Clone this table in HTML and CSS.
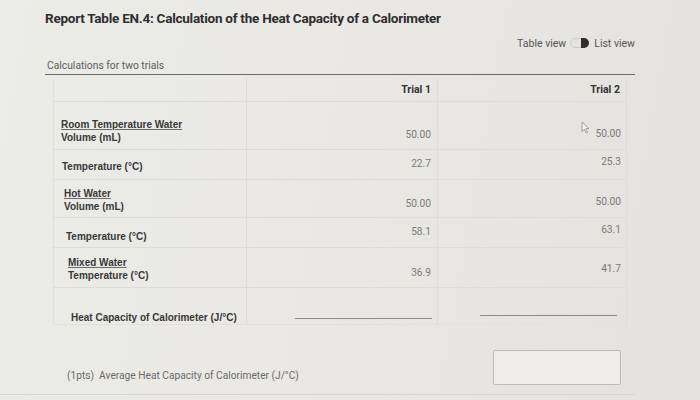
FILE: index.html
```html
<!DOCTYPE html>
<html>
<head>
<meta charset="utf-8">
<link rel="stylesheet" href="styles.css">
</head>
<body>
<div class="page">
  <h1 class="title">Report Table EN.4: Calculation of the Heat Capacity of a Calorimeter</h1>
  <div class="toggle-row">
    <span class="toggle-label">Table view</span>
    <svg class="switch" width="24" height="14" viewBox="0 0 24 14">
      <path d="M7 2.5 H15 A4.5 4.5 0 0 1 15 11.5 H7 A4.5 4.5 0 0 1 7 2.5 Z" fill="#e4e3e0" stroke="#cfcdca" stroke-width="1"/>
      <path d="M13 2 H16 A5 5 0 0 1 16 12 H13 Z" fill="#2e2e30"/>
    </svg>
    <span class="toggle-label">List view</span>
  </div>
  <div class="section-head">Calculations for two trials</div>
  <div class="table">
    <div class="cell head"></div>
    <div class="cell head num">Trial 1</div>
    <div class="cell head num">Trial 2</div>

    <div class="cell label r1"><div><span class="u">Room Temperature Water</span><br>Volume (mL)</div></div>
    <div class="cell val r1">50.00</div>
    <div class="cell val r1 v2"><svg class="cursor" width="9" height="13" viewBox="0 0 9 13"><path d="M1 1 L1 10.5 L3.4 8.3 L5.2 12 L6.6 11.3 L4.9 7.7 L8 7.5 Z" fill="#f2f2f0" stroke="#8a8a8a" stroke-width="0.8" stroke-linejoin="round"/></svg>50.00</div>

    <div class="cell label r2 in1"><div>Temperature (°C)</div></div>
    <div class="cell val r2">22.7</div>
    <div class="cell val r2 v2">25.3</div>

    <div class="cell label r3 in2"><div><span class="u">Hot Water</span><br>Volume (mL)</div></div>
    <div class="cell val r3">50.00</div>
    <div class="cell val r3 v2">50.00</div>

    <div class="cell label r4 in3"><div>Temperature (°C)</div></div>
    <div class="cell val r4">58.1</div>
    <div class="cell val r4 v2">63.1</div>

    <div class="cell label r5 in4"><div><span class="u">Mixed Water</span><br>Temperature (°C)</div></div>
    <div class="cell val r5">36.9</div>
    <div class="cell val r5 v2">41.7</div>

    <div class="cell label r6 in5"><div>Heat Capacity of Calorimeter (J/°C)</div></div>
    <div class="cell line-cell r6"><span class="blank b1"></span></div>
    <div class="cell line-cell r6"><span class="blank b2"></span></div>
  </div>
  <div class="avg-row">
    <span class="avg-label">(1pts)&nbsp; Average Heat Capacity of Calorimeter (J/°C)</span>
    <span class="avg-box"></span>
  </div>
</div>
</body>
</html>
```

FILE: styles.css
```css
html, body {
  margin: 0;
  padding: 0;
}
body {
  width: 700px;
  height: 400px;
  overflow: hidden;
  background: linear-gradient(100deg, #ebebe8 0%, #e9e8e5 50%, #e4e1de 100%);
  font-family: Roboto, "Liberation Sans", sans-serif;
}
.page {
  padding: 9px 0 0 45px;
  width: 590px;
  height: 385px;
  border-bottom: 1px solid #d8d6d2;
}
.title {
  margin: 0;
  font-size: 13.5px;
  font-weight: 700;
  color: #2f2f30;
  letter-spacing: -0.25px;
  line-height: 18px;
}
.toggle-row {
  display: flex;
  justify-content: flex-end;
  align-items: center;
  gap: 2px;
  margin-top: 9px;
  height: 14px;
}
.toggle-label {
  font-size: 10.5px;
  color: #555;
}
.switch {
  display: block;
}
.section-head {
  margin-top: 9px;
  padding: 0 0 2px 2px;
  font-size: 10.3px;
  color: #5c5c5c;
  border-bottom: 1px solid #6b6b6b;
  line-height: 13px;
}
.table {
  display: grid;
  grid-template-columns: 194px 191px 189px;
  margin-left: 8px;
  margin-top: 3px;
}
.cell {
  box-sizing: border-box;
  border-right: 1px solid #dddcd8;
  border-bottom: 1px solid #dddcd8;
}
.cell:nth-child(3n+1) {
  border-left: 1px solid #e0dfdb;
}
.head {
  height: 24px;
  font-size: 10.5px;
  font-weight: 700;
  color: #333;
  padding: 5px 6px 0 0;
}
.head.num { text-align: right; }
.label {
  font-family: "Liberation Sans", Arial, sans-serif;
  font-size: 10px;
  font-weight: 700;
  color: #383838;
  line-height: 13px;
  padding-left: 7px;
  display: flex;
  flex-direction: column;
  justify-content: flex-end;
}
.label .u {
  text-decoration: underline;
  text-decoration-color: #6a6a6a;
  text-underline-offset: 1px;
}
.in1 { padding-left: 8px; }
.in2 { padding-left: 10px; }
.in3 { padding-left: 12px; }
.in4 { padding-left: 14px; }
.in5 { padding-left: 17px; }
.val {
  font-size: 10.2px;
  color: #7a7a7a;
  text-align: right;
  padding-right: 6px;
  display: flex;
  align-items: flex-end;
  justify-content: flex-end;
}
.v2 { padding-right: 5px; }
.r1 { height: 48px; padding-bottom: 5px; }
.r1.val { padding-bottom: 9px; }
.r1.v2 { padding-bottom: 10px; }
.r2 { height: 30px; padding-bottom: 6px; }
.r2.val { padding-bottom: 10px; }
.r2.v2 { padding-bottom: 12px; }
.r3 { height: 38px; padding-bottom: 4px; }
.r3.val { padding-bottom: 8px; }
.r3.v2 { padding-bottom: 10px; }
.r4 { height: 30px; padding-bottom: 4px; }
.r4.val { padding-bottom: 10px; }
.r4.v2 { padding-bottom: 12px; }
.r5 { height: 40px; padding-bottom: 5px; }
.r5.val { padding-bottom: 9px; }
.r5.v2 { padding-bottom: 13px; }
.r6 { height: 37px; padding-bottom: 3px; }
.label.r6 { padding-bottom: 0; }
.cell.r6 { border-bottom: 1px solid #e2e1dd; }
.line-cell {
  display: flex;
  align-items: flex-end;
  padding-bottom: 5px;
}
.blank {
  display: block;
  height: 1px;
  background: #8c8c8c;
}
.b1 { margin-left: 48px; width: 137px; }
.b2 { margin-left: 42px; width: 137px; margin-bottom: 3px; }
.cursor {
  display: block;
  margin-right: 5px;
  margin-bottom: 5px;
}
.avg-row {
  display: flex;
  align-items: flex-end;
  margin-top: 25px;
  padding-left: 22px;
}
.avg-label {
  font-size: 10.2px;
  color: #6a6a6a;
  width: 426px;
  padding-bottom: 4px;
}
.avg-box {
  display: block;
  width: 128px;
  height: 35px;
  box-sizing: border-box;
  border: 1px solid #bdbcb8;
  border-radius: 2px;
  background: #eeedea;
}
```
